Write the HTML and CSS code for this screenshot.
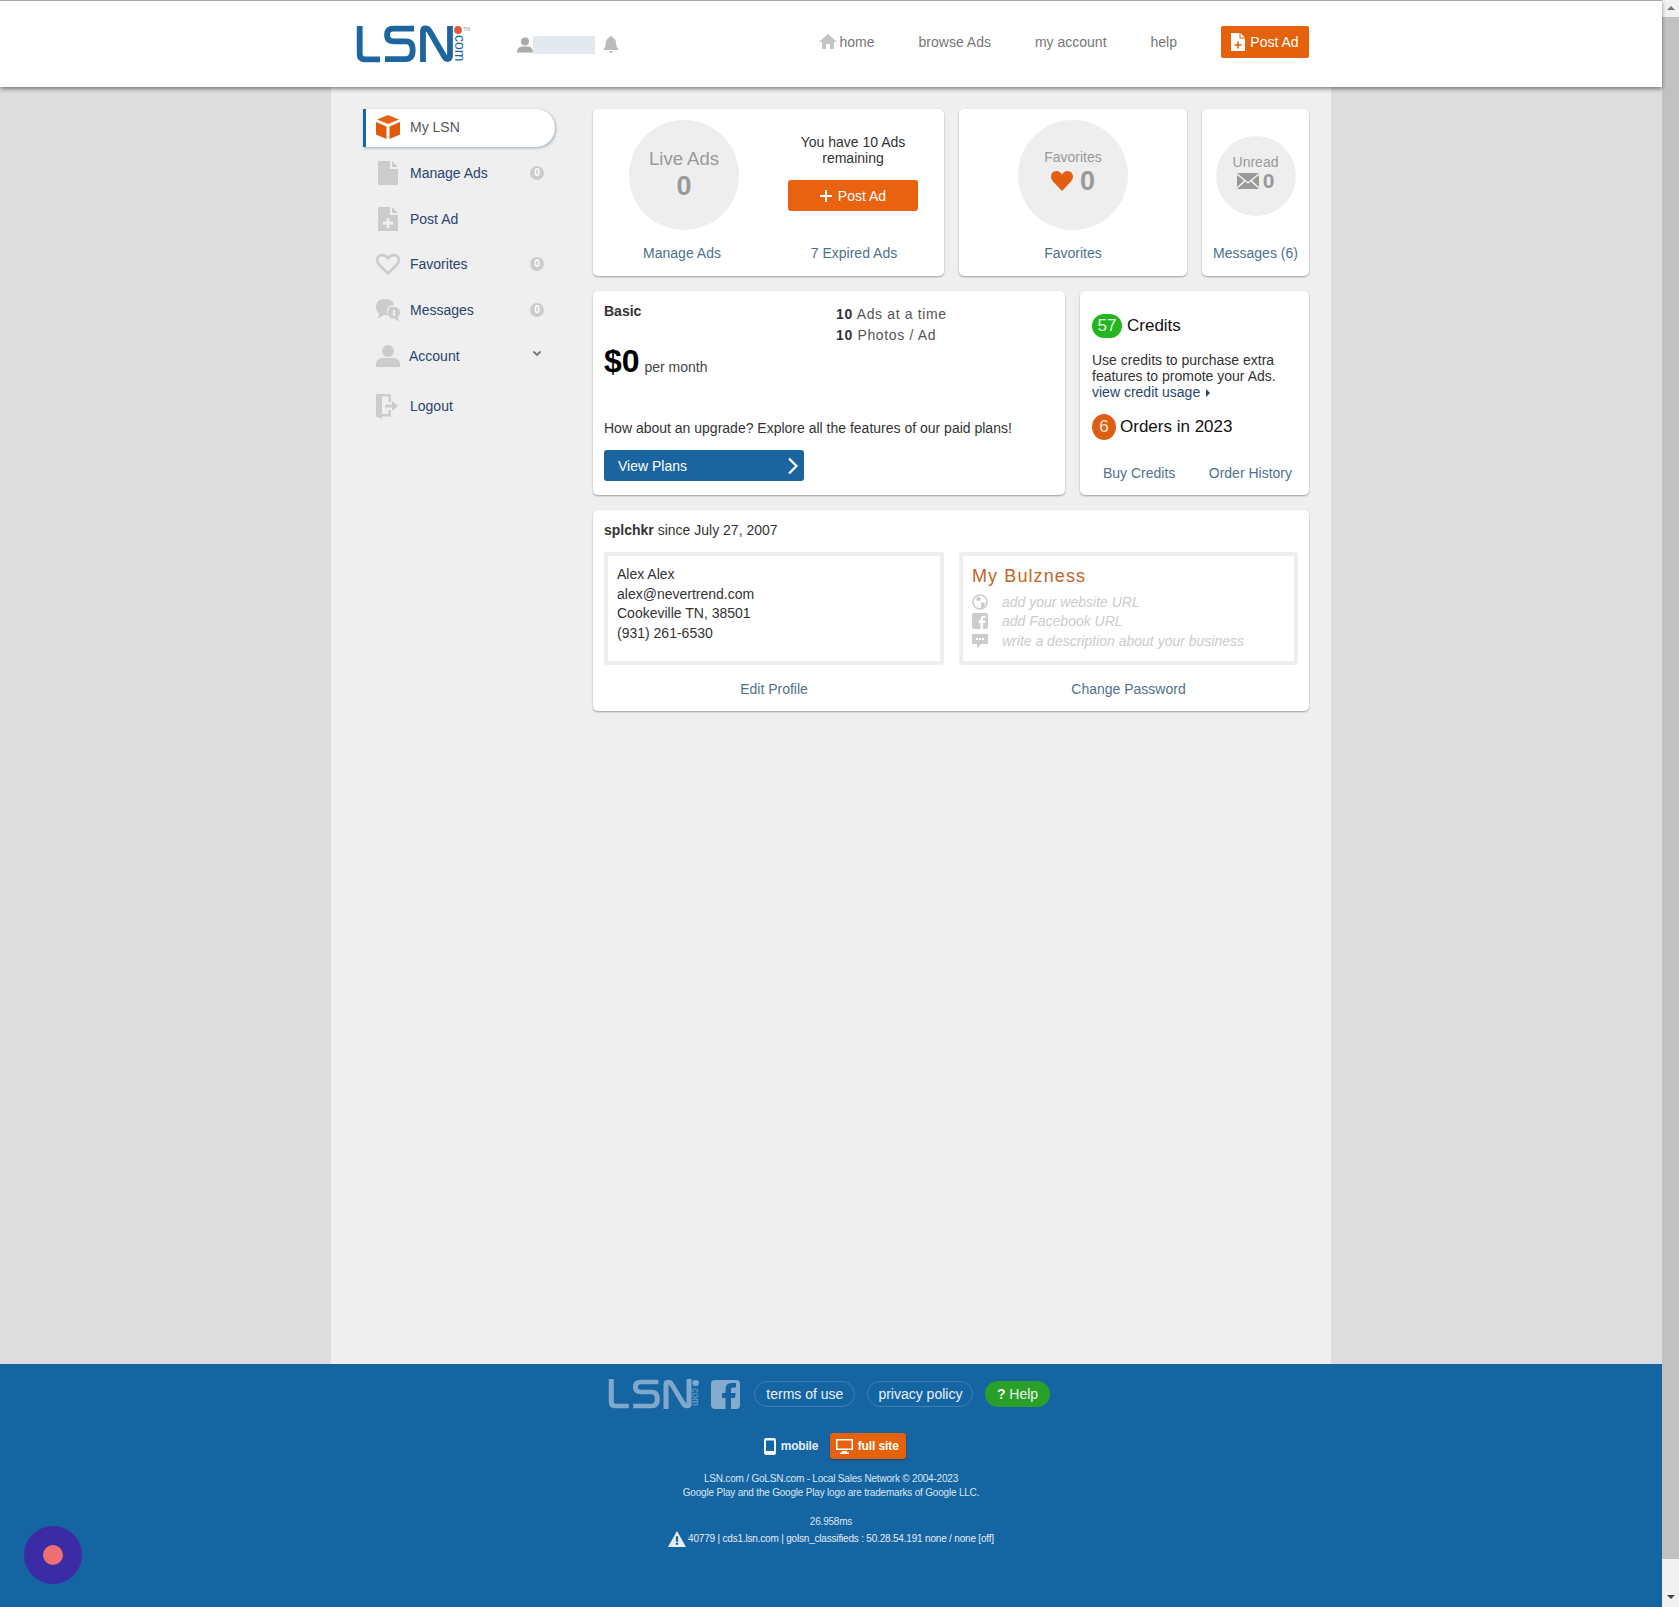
FILE: index.html
```html
<!DOCTYPE html>
<html lang="en">
<head>
<meta charset="utf-8">
<title>My LSN</title>
<link rel="stylesheet" href="styles.css">
</head>
<body>
<div class="window">
  <div class="page">
    <header class="topbar">
      <div class="topbar-in">
        <a class="logo">
          <svg width="116" height="38" viewBox="0 0 116 38">
            <g fill="none" stroke="#1c659f" stroke-width="5.800">
              <path d="M3.700 1V29q0 5.300 5 5.300H24"/>
              <path d="M58 3.700H37.500q-6.500 0-6.500 6.300t6.500 6.300H50q6.700 0 6.700 8.800t-6.700 9H29"/>
              <path d="M67 37V6.500q0-3 2.500-3t4 2.500L88 31q1.500 3 3.500 3t2.500-3V1"/>
            </g>
            <circle cx="102" cy="5" r="3.900" fill="#de5b3f"/>
            <text class="logo-com" transform="translate(99 10) rotate(90)">com</text>
            <text class="logo-tm" x="107" y="6">TM</text>
          </svg>
        </a>
        <svg class="user-ic" width="16" height="16" viewBox="0 0 16 16"><circle cx="8" cy="4.500" r="4" fill="#aaa"/><path d="M0 15.500q0-5.500 5-6h6q5 .5 5 6z" fill="#aaa"/></svg>
        <span class="user-blur"></span>
        <svg class="bell-ic" width="16" height="17" viewBox="0 0 16 17"><path d="M8 0q1.500 0 1.500 1.500 3.500 1 3.500 5.500 0 4 3 7H0q3-3 3-7 0-4.500 3.500-5.500Q6.500 0 8 0zM6 15h4q-.5 2-2 2t-2-2z" fill="#bbb"/></svg>
        <nav class="nav">
          <a class="nav-link"><svg width="18" height="15" viewBox="0 0 18 15"><path d="M9 0 18 8h-3v7h-4v-5H7v5H3V8H0z" fill="#c4c4c4"/></svg>home</a>
          <a class="nav-link">browse Ads</a>
          <a class="nav-link">my account</a>
          <a class="nav-link">help</a>
          <a class="nav-post"><svg width="14" height="18" viewBox="0 0 14 18"><path d="M0 0h8.500v5.500H14V18H0zM9.500 0 14 4.500H9.500z" fill="#fff"/><path d="M6.200 8.500h1.600v2.700h2.700v1.600H7.800v2.700H6.200v-2.700H3.500v-1.600h2.700z" fill="#e8620f"/></svg>Post Ad</a>
        </nav>
      </div>
    </header>

    <div class="middle">
      <aside class="side">
        <a class="side-item side-active">
          <svg class="side-ic" width="24" height="24" viewBox="0 0 24 24"><path d="M12 0 23 4.500 12 9 1 4.500z" fill="#e8620f"/><path d="M0 7 10.500 11.500V24L0 19.500zM24 7 13.500 11.500V24L24 19.500z" fill="#e05a0c"/></svg>
          <span>My LSN</span>
        </a>
        <a class="side-item">
          <svg class="side-ic" width="24" height="24" viewBox="0 0 24 24"><path d="M2 1q0-1 1-1h11v8h8v15q0 1-1 1H3q-1 0-1-1zM16 0l6 6h-6z" fill="#ccc"/></svg>
          <span class="side-label">Manage Ads</span><b class="badge">0</b>
        </a>
        <a class="side-item side-tight">
          <svg class="side-ic" width="24" height="24" viewBox="0 0 24 24"><path d="M2 1q0-1 1-1h11v8h8v15q0 1-1 1H3q-1 0-1-1zM16 0l6 6h-6z" fill="#ccc"/><path d="M10.500 11h3v3.500H17v3h-3.500V21h-3v-3.500H7v-3h3.500z" fill="#eee"/></svg>
          <span class="side-label">Post Ad</span>
        </a>
        <a class="side-item">
          <svg class="side-ic" width="24" height="24" viewBox="0 0 24 24"><path d="M12 21.500 3 12.500Q1.200 10.500 1.200 8 1.200 3.500 6 3q3.500 0 6 3.200Q14.500 3 18 3q4.800.5 4.800 5 0 2.500-1.800 4.500z" fill="none" stroke="#ccc" stroke-width="2.600"/></svg>
          <span class="side-label">Favorites</span><b class="badge">0</b>
        </a>
        <a class="side-item">
          <svg class="side-ic" width="24" height="24" viewBox="0 0 24 24"><path d="M9 1q8 0 9 6-6 0-7 5-.5 3 1.500 5-3 .5-5 0Q5 20 1 20.500 3.500 18 3 15.500 0 13 0 9q0-8 9-8z" fill="#ccc"/><path d="M18 9q6 0 6 5.500 0 3-2 4.500 0 2 1 4-3-.5-4.500-2.500-6.500.5-6.500-6T18 9z" fill="#ccc"/><rect x="17" y="12" width="2" height="6" fill="#eee"/></svg>
          <span class="side-label">Messages</span><b class="badge">0</b>
        </a>
        <a class="side-item side-account">
          <svg class="side-ic" width="24" height="22" viewBox="0 0 24 22"><circle cx="12" cy="6" r="6" fill="#ccc"/><path d="M0 22v-3q0-5 6-6h12q6 1 6 6v3z" fill="#ccc"/></svg>
          <span class="side-label">Account</span>
          <svg class="chev" width="10" height="7" viewBox="0 0 10 7"><path d="M1.500 1.500 5 5l3.500-3.500" fill="none" stroke="#777" stroke-width="1.800"/></svg>
        </a>
        <a class="side-item side-logout">
          <svg class="side-ic" width="24" height="26" viewBox="0 0 24 26"><path d="M0 1h15v8h-2.500V3.500H6V21h6.500v-4H15v6.500H6V26L0 23.500z" fill="#ccc"/><path d="M9 11.500h7V8l6 5-6 5v-3.500H9z" fill="#ccc"/></svg>
          <span class="side-label">Logout</span>
        </a>
      </aside>

      <main class="content">
        <section class="row">
          <div class="card card-live">
            <div class="stat-col">
              <div class="circle circle-lg">
                <span class="live-label">Live Ads</span>
                <strong class="stat-big">0</strong>
              </div>
              <a class="card-link link-manage">Manage Ads</a>
            </div>
            <div class="remain-col">
              <p class="remain-text">You have 10 Ads<br>remaining</p>
              <a class="btn-post"><span class="plus"></span>Post Ad</a>
              <a class="card-link link-expired">7 Expired Ads</a>
            </div>
          </div>
          <div class="card card-fav">
            <div class="circle circle-lg">
              <span class="circle-label">Favorites</span>
              <span class="stat-line">
                <svg width="22" height="20" viewBox="0 0 22 20"><path d="M11 20 2 10.500Q0 8.500 0 5.800 0 .5 5.500 0 9 0 11 3.500 13 0 16.500 0 22 .5 22 5.800 22 8.500 20 10.500z" fill="#e05f10"/></svg>
                <strong class="stat-big">0</strong>
              </span>
            </div>
            <a class="card-link">Favorites</a>
          </div>
          <div class="card card-msg">
            <div class="circle circle-sm">
              <span class="circle-label">Unread</span>
              <span class="stat-line stat-line-sm">
                <svg width="22" height="16" viewBox="0 0 22 16"><path d="M0 0h22L11 9zM0 2l7 5.500L0 14zM22 2l-7 5.500L22 14zM0 16l8.500-7.500L11 11l2.500-2.500L22 16z" fill="#999"/></svg>
                <strong class="stat-mid">0</strong>
              </span>
            </div>
            <a class="card-link">Messages (6)</a>
          </div>
        </section>

        <section class="row">
          <div class="card card-plan">
            <div class="plan-top">
              <div class="plan-left">
                <strong class="plan-name">Basic</strong>
                <div class="plan-price"><strong>$0</strong> <span>per month</span></div>
              </div>
              <div class="plan-right">
                <div><b>10</b> Ads at a time</div>
                <div><b>10</b> Photos / Ad</div>
              </div>
            </div>
            <p class="plan-upsell">How about an upgrade? Explore all the features of our paid plans!</p>
            <a class="btn-plans">View Plans
              <svg width="12" height="18" viewBox="0 0 12 18"><path d="M2 1.500 9.500 9 2 16.500" fill="none" stroke="#fff" stroke-width="2.200"/></svg>
            </a>
          </div>
          <div class="card card-credits">
            <div class="credit-head"><span class="pill-green">57</span><span>Credits</span></div>
            <p class="credit-text">Use credits to purchase extra features to promote your Ads.<br><a class="credit-usage">view credit usage <i class="tri"></i></a></p>
            <div class="order-head"><span class="pill-orange">6</span><span>Orders in 2023</span></div>
            <div class="credit-links"><a class="card-link">Buy Credits</a><a class="card-link">Order History</a></div>
          </div>
        </section>

        <section class="card card-profile">
          <div class="since"><b>splchkr</b> since July 27, 2007</div>
          <div class="profile-boxes">
            <div class="profile-col">
              <div class="pbox pbox-info">Alex Alex<br>alex@nevertrend.com<br>Cookeville TN, 38501<br>(931) 261-6530</div>
              <a class="card-link">Edit Profile</a>
            </div>
            <div class="profile-col">
              <div class="pbox pbox-biz">
                <div class="biz-title">My Bulzness</div>
                <div class="biz-row">
                  <svg width="16" height="16" viewBox="0 0 16 16"><circle cx="8" cy="8" r="7" fill="none" stroke="#ccc" stroke-width="1.600"/><path d="M5 2.500 9 4 8 7 4 6.500zM9 8l4 1-1 4.500-3 1.500z" fill="#ccc"/></svg>
                  <span>add your website URL</span>
                </div>
                <div class="biz-row">
                  <svg width="16" height="16" viewBox="0 0 16 16"><path d="M2 0h12q2 0 2 2v12q0 2-2 2h-3v-6h2.200l.3-2.500H11V6q0-1 1-1h1.500V2.700H11.500Q8.500 2.700 8.500 6v1.500h-2V10h2v6H2q-2 0-2-2V2q0-2 2-2z" fill="#ccc"/></svg>
                  <span>add Facebook URL</span>
                </div>
                <div class="biz-row">
                  <svg width="16" height="16" viewBox="0 0 16 16"><path d="M1 1h14q1 0 1 1v8q0 1-1 1H9l-4 4.500V11H1q-1 0-1-1V2q0-1 1-1z" fill="#ccc"/><path d="M4 5h2v2H4zM7 5h2v2H7zM10 5h2v2h-2z" fill="#fff"/></svg>
                  <span>write a description about your business</span>
                </div>
              </div>
              <a class="card-link">Change Password</a>
            </div>
          </div>
        </section>
      </main>
    </div>

    <footer class="footer">
      <div class="foot-row">
        <svg class="foot-logo" width="92" height="30" viewBox="0 0 84 30" preserveAspectRatio="none">
          <g fill="none" stroke="#7fa8cc" stroke-width="4.600">
            <path d="M3 0V23q0 4 4 4H19"/>
            <path d="M46 3H30q-5 0-5 5t5 5h10q5 0 5 7t-5 7H23"/>
            <path d="M53 30V5q0-2 2-2t3 2L69 25q1 2 3 2t2-2V0"/>
          </g>
          <circle cx="80" cy="4" r="3" fill="#7fa8cc"/>
          <text class="foot-com" transform="translate(76.500 9) rotate(90)">com</text>
        </svg>
        <svg class="foot-fb" width="29" height="29" viewBox="0 0 29 29"><path d="M4 0h21q4 0 4 4v21q0 4-4 4h-5V18h4l.7-5H20V9.500q0-2 2-2h3V3h-4.500Q14.500 3 14.500 9v4H11v5h3.500v11H4q-4 0-4-4V4q0-4 4-4z" fill="#85accf"/></svg>
        <a class="foot-pill">terms of use</a>
        <a class="foot-pill foot-privacy">privacy policy</a>
        <a class="foot-help"><b>?</b> Help</a>
      </div>
      <div class="foot-row foot-modes">
        <a class="mode-mobile">
          <svg width="12" height="17" viewBox="0 0 12 17"><path d="M2 0h8q2 0 2 2v13q0 2-2 2H2q-2 0-2-2V2q0-2 2-2zm0 2.500V13h8V2.500z" fill="#f2f6fa" fill-rule="evenodd"/></svg>
          mobile
        </a>
        <a class="mode-full">
          <svg width="17" height="15" viewBox="0 0 17 15"><path d="M0 0h17v11H0zm1.500 1.500v8h14v-8zM6 12h5v1.500h2V15H4v-1.500h2z" fill="#fff" fill-rule="evenodd"/></svg>
          full site
        </a>
      </div>
      <div class="foot-legal">
        LSN.com / GoLSN.com - Local Sales Network © 2004-2023<br>
        Google Play and the Google Play logo are trademarks of Google LLC.
      </div>
      <div class="foot-time">26.958ms</div>
      <div class="foot-debug">
        <svg width="18" height="16" viewBox="0 0 16 15" preserveAspectRatio="none"><path d="M8 0 16 15H0zM7 5v5h2V5zM7 11v2h2v-2z" fill="#e6eef5" fill-rule="evenodd"/></svg>
        40779 | cds1.lsn.com | golsn_classifieds : 50.28.54.191 none / none [off]
      </div>
      <div class="chat-widget"><span class="chat-dot"></span></div>
    </footer>
  </div>
  <div class="scrollbar">
    <span class="sb-up"></span>
    <span class="sb-thumb"></span>
    <span class="sb-down"></span>
  </div>
</div>
</body>
</html>
```

FILE: styles.css
```css
* { box-sizing: border-box; }
html, body { margin: 0; padding: 0; }
body {
  font-family: "Liberation Sans", Arial, sans-serif;
  font-size: 14px;
  color: #333;
  background: #ddd;
}
p { margin: 0; }
a { text-decoration: none; }

.window { display: flex; height: 1607px; overflow: hidden; }
.page { flex: 1; min-width: 0; display: flex; flex-direction: column; position: relative; }

/* scrollbar */
.scrollbar { width: 17px; background: #f1f1f1; display: flex; flex-direction: column; align-items: center; }
.sb-up { width: 0; height: 0; margin: 6px 0 7px; border: 4px solid transparent; border-top: 0; border-bottom-color: #777; }
.sb-thumb { width: 100%; height: 1542px; background: #c1c1c1; }
.sb-down { width: 0; height: 0; margin-top: 36px; border: 4px solid transparent; border-bottom: 0; border-top-color: #444; }

/* header */
.topbar {
  height: 87px;
  flex: none;
  background: #fff;
  border-top: 1px solid #aaa;
  box-shadow: 0 2px 4px rgba(0,0,0,.45);
  position: relative;
  z-index: 2;
}
.topbar-in { width: 1000px; height: 100%; margin: 0 auto; padding: 0 22px 0 25px; display: flex; align-items: center; }
.logo { display: block; height: 38px; }
.logo svg { display: block; overflow: visible; }
.logo-com { font: 14px "Liberation Sans", Arial, sans-serif; fill: #1c659f; }
.logo-tm { font: 5px "Liberation Sans", Arial, sans-serif; fill: #999; }
.user-ic { margin-left: 45px; margin-top: 2px; }
.user-blur { width: 62px; height: 18px; background: #e4e9ef; margin-top: 1px; }
.bell-ic { margin-left: 8px; margin-top: 1px; }
.nav { margin-left: auto; display: flex; align-items: center; height: 32px; margin-top: -5px; }
.nav-link { color: #777; padding: 0 22px; display: flex; align-items: center; gap: 3px; font-size: 14px; }
.nav-post {
  margin-left: 22px;
  width: 88px;
  height: 32px;
  background: #e5610b;
  border-radius: 2px;
  color: #fff;
  display: flex;
  align-items: center;
  justify-content: center;
  gap: 5px;
}

/* middle */
.middle { width: 1000px; height: 1277px; margin: 0 auto; flex: none; background: #efefef; padding: 22px 22px 0 32px; display: flex; }

.side { width: 198px; margin-right: 32px; flex: none; }
.side-item { display: flex; align-items: center; height: 38px; margin-bottom: 8px; padding-left: 13px; padding-bottom: 2px; color: #2b4470; position: relative; }
.side-tight { margin-bottom: 7px; }
.side-account { margin-bottom: 0; }
.side-ic { flex: none; margin-right: 10px; }
.side-label { flex: 1; }
.side-active { width: 192px; color: #555; background: #fff; border-left: 3px solid #1c659f; border-radius: 0 19px 19px 0; box-shadow: 1px 1px 3px rgba(60,90,130,.45); padding-left: 10px; }
.badge { width: 14px; height: 14px; margin-right: 17px; border-radius: 50%; background: #ccc; color: #fff; font-size: 10px; font-weight: 700; line-height: 14px; text-align: center; }
.side-account .side-label { margin-left: -1px; }
.chev { margin-right: 19px; margin-top: -5px; }
.side-logout { margin-top: 12px; }

.content { width: 716px; flex: none; display: flex; flex-direction: column; gap: 15px; }
.row { display: flex; gap: 15px; }
.card { background: #fff; border-radius: 5px; box-shadow: 0 1px 2px rgba(0,0,0,.35); }
.card-link { color: #4f7190; text-align: center; display: block; }

/* row 1 */
.card-live { width: 351px; height: 167px; display: flex; }
.card-fav { width: 228px; height: 167px; display: flex; flex-direction: column; align-items: center; padding-top: 11px; }
.card-msg { width: 107px; height: 167px; display: flex; flex-direction: column; align-items: center; padding-top: 27px; }
.circle { border-radius: 50%; background: #eee; display: flex; flex-direction: column; align-items: center; justify-content: center; color: #999; flex: none; }
.circle-lg { width: 110px; height: 110px; }
.circle-sm { width: 80px; height: 80px; }
.stat-col { width: 177px; padding: 11px 0 0 36px; }
.live-label { font-size: 18.500px; line-height: 21px; margin-bottom: 2px; }
.stat-big { font-size: 27px; line-height: 31px; color: #999; }
.stat-mid { font-size: 21px; line-height: 24px; color: #999; }
.circle-label { font-size: 14px; line-height: 16px; }
.stat-line { display: flex; align-items: center; gap: 7px; margin-top: 1px; margin-bottom: 5px; }
.stat-line-sm { gap: 4px; margin-bottom: 6px; margin-top: -1px; }
.card-fav .card-link { margin-top: 15px; }
.card-msg .card-link { margin-top: 29px; }
.link-manage { width: 110px; margin-left: -2px; margin-top: 15px; }
.remain-col { flex: 1; padding: 25px 26px 0 18px; display: flex; flex-direction: column; align-items: center; width: 130px; }
.remain-text { text-align: center; line-height: 16px; white-space: nowrap; color: #333; }
.btn-post {
  width: 130px;
  height: 31px;
  margin-top: 14px;
  background: #e8620f;
  border-radius: 3px;
  color: #fff;
  display: flex;
  align-items: center;
  justify-content: center;
  gap: 6px;
  flex: none;
}
.plus { width: 12px; height: 12px; background:
  linear-gradient(#fff,#fff) center/12px 2px no-repeat,
  linear-gradient(#fff,#fff) center/2px 12px no-repeat; }
.link-expired { margin-top: 34px; margin-left: 2px; white-space: nowrap; }

/* row 2 */
.card-plan { width: 472px; height: 204px; padding: 11px 11px 0; }
.plan-top { display: flex; height: 118px; }
.plan-left { width: 232px; }
.plan-name { display: block; line-height: 18px; }
.plan-price { margin-top: 23px; line-height: 37px; }
.plan-price strong { font-size: 32px; color: #000; }
.plan-price span { font-size: 14px; color: #444; margin-left: 1px; }
.plan-right { padding-top: 2px; letter-spacing: .65px; color: #555; line-height: 21px; }
.plan-right b { color: #333; }
.plan-upsell { line-height: 16px; }
.btn-plans {
  margin-top: 14px;
  width: 200px;
  height: 31px;
  background: #1a659f;
  border-radius: 3px;
  color: #fff;
  display: flex;
  align-items: center;
  justify-content: space-between;
  padding: 0 5px 0 14px;
}
.card-credits { width: 229px; height: 204px; padding: 23px 11px 0 12px; }
.credit-head { display: flex; align-items: center; gap: 5px; font-size: 17px; color: #111; }
.pill-green { width: 30px; height: 24px; border-radius: 15px; background: #22b51f; color: #e6f6e6; text-align: center; line-height: 24px; font-size: 17px; }
.credit-text { margin-top: 14px; line-height: 16px; font-size: 14px; color: #333; }
.credit-usage { color: #26466f; }
.tri { display: inline-block; width: 0; height: 0; border: 4px solid transparent; border-left-color: #26466f; border-right: 0; margin-left: 2px; vertical-align: 0; }
.order-head { margin-top: 14px; display: flex; align-items: center; gap: 4px; font-size: 17px; color: #111; }
.pill-orange { width: 24px; height: 26px; border-radius: 50%; background: #dd5f15; color: #f8e6d8; text-align: center; line-height: 26px; font-size: 17px; }
.credit-links { display: flex; justify-content: space-between; margin-top: 25px; padding: 0 6px 0 11px; }

/* row 3 */
.card-profile { height: 201px; padding: 11px 11px 0; }
.since { line-height: 18px; }
.profile-boxes { display: flex; gap: 15px; margin-top: 13px; }
.profile-col { width: 340px; flex: none; }
.profile-col + .profile-col { width: 339px; }
.pbox { height: 113px; border: 4px solid #eee; border-radius: 3px; }
.pbox-info { padding: 9px 9px 0; line-height: 19.600px; }
.pbox-biz { padding: 10px 9px 0; }
.biz-title { font-size: 18px; line-height: 20px; letter-spacing: 1.100px; color: #c2652a; margin-bottom: 6px; }
.biz-row { display: flex; align-items: center; gap: 14px; height: 19.500px; color: #ccc; font-style: italic; }
.biz-row svg { flex: none; }
.profile-col .card-link { margin-top: 16px; line-height: 16px; }

/* footer */
.footer { flex: 1; background: #1665a3; color: #e3edf5; padding-top: 15px; position: relative; }
.foot-row { display: flex; align-items: center; justify-content: center; }
.foot-logo { margin-left: -4px; overflow: visible; }
.foot-com { font: 9.500px "Liberation Sans", Arial, sans-serif; fill: #7fa8cc; }
.foot-fb { margin-left: 11px; }
.foot-pill { margin-left: 14px; height: 26px; padding: 0 11px; border: 1px solid #3d7fb5; border-radius: 13px; color: #e8f0f7; line-height: 24px; }
.foot-privacy { margin-left: 12px; padding: 0 10px; }
.foot-help { margin-left: 12px; height: 26px; padding: 0 11.500px; border-radius: 13px; background: #2aa02a; color: #e8f5e8; line-height: 26px; }
.foot-modes { margin-top: 24px; gap: 12px; margin-left: 8px; }
.mode-mobile { display: flex; align-items: center; gap: 5px; font-size: 12px; font-weight: 700; color: #e3edf5; letter-spacing: -.2px; }
.mode-full { width: 76px; height: 26px; display: flex; align-items: center; justify-content: center; gap: 5px; padding-right: 2px; background: #e5610b; border-radius: 3px; box-shadow: 0 1px 2px rgba(0,0,0,.35); color: #fff; font-size: 12px; font-weight: 700; letter-spacing: -.1px; }
.foot-legal { margin-top: 13px; text-align: center; font-size: 10px; line-height: 14px; letter-spacing: -.2px; color: #dbe7f1; }
.foot-time { margin-top: 15px; text-align: center; font-size: 10px; line-height: 14px; letter-spacing: -.2px; color: #dbe7f1; }
.foot-debug { margin-top: 1px; display: flex; align-items: center; justify-content: center; gap: 2px; font-size: 10px; line-height: 18px; letter-spacing: -.19px; color: #e3edf5; }
.chat-widget { position: absolute; left: 24px; top: 162px; width: 58px; height: 58px; border-radius: 50%; background: #3b2ba5; display: flex; align-items: center; justify-content: center; }
.chat-dot { width: 20px; height: 20px; border-radius: 50%; background: #ee6e73; }
```
